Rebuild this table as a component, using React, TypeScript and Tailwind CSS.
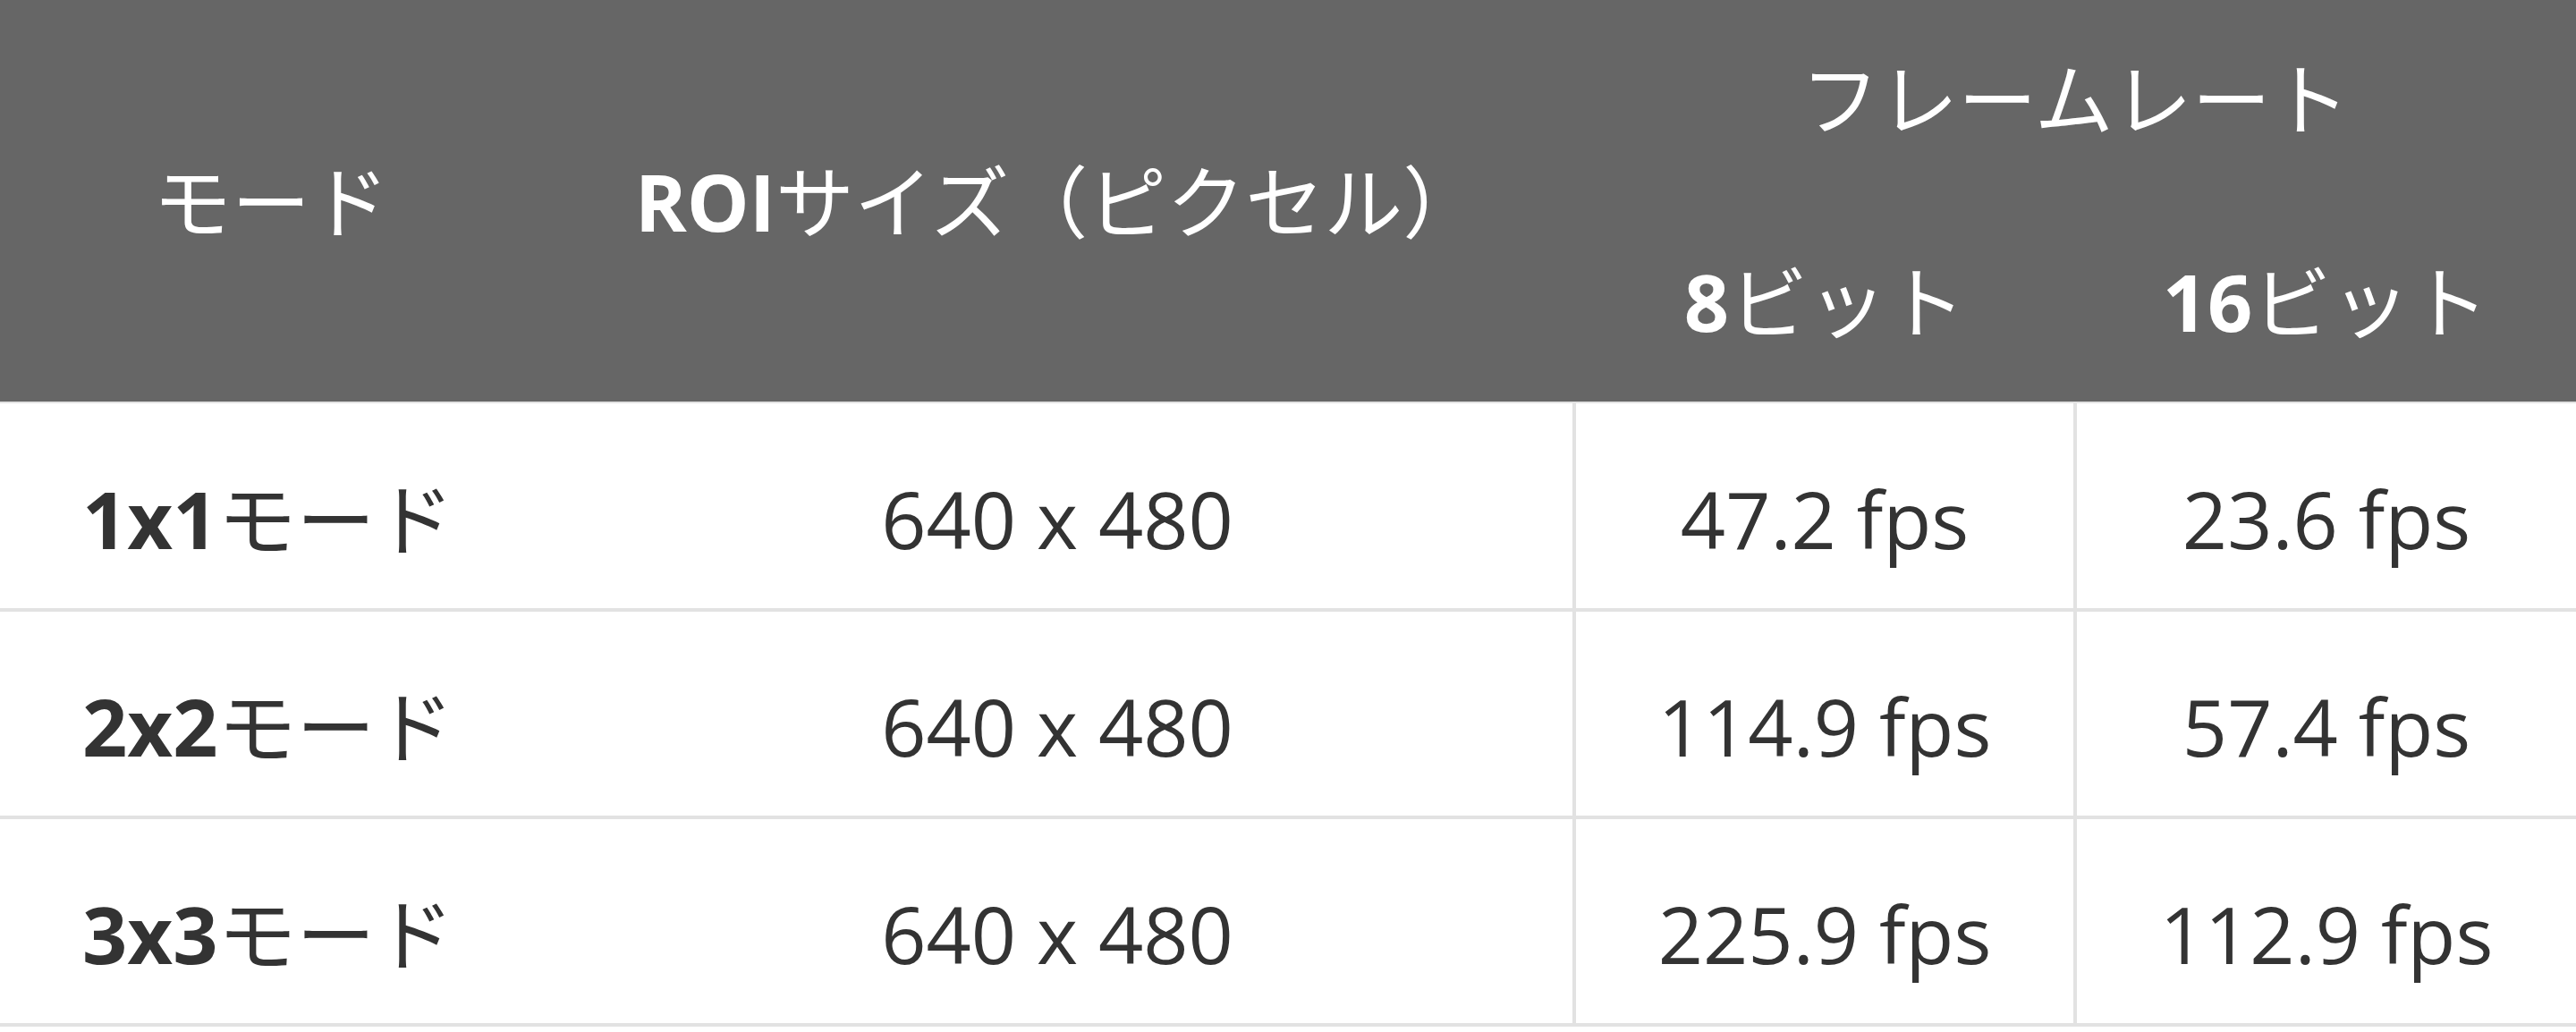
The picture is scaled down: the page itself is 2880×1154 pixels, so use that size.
const rows = [
  { mode: "1x1", size: "640 x 480", fps8: "47.2 fps", fps16: "23.6 fps" },
  { mode: "2x2", size: "640 x 480", fps8: "114.9 fps", fps16: "57.4 fps" },
  { mode: "3x3", size: "640 x 480", fps8: "225.9 fps", fps16: "112.9 fps" },
];

const jp = "font-normal";

export default function App() {
  return (
    <div className="min-h-screen bg-white font-['Open_Sans','Noto_Sans_CJK_JP',sans-serif] text-[88px] leading-none">
      <table className="w-[2880px] table-fixed border-collapse">
        <colgroup>
          <col className="w-[606px]" />
          <col className="w-[1154px]" />
          <col className="w-[560px]" />
          <col className="w-[560px]" />
        </colgroup>
        <thead className="bg-[#666666] text-white">
          <tr className="h-[225px]">
            <th rowSpan={2} className={`text-center align-middle ${jp}`}>
              モード
            </th>
            <th rowSpan={2} className="text-center align-middle">
              <span className="font-bold">ROI</span>
              <span className={jp}>サイズ（ピクセル）</span>
            </th>
            <th colSpan={2} className={`pb-[6px] text-center align-middle ${jp}`}>
              フレームレート
            </th>
          </tr>
          <tr className="h-[225px]">
            <th className="text-center align-middle">
              <span className="font-bold">8</span>
              <span className={jp}>ビット</span>
            </th>
            <th className="text-center align-middle">
              <span className="font-bold">16</span>
              <span className={jp}>ビット</span>
            </th>
          </tr>
        </thead>
        <tbody className="text-[#333333]">
          {rows.map((r, i) => (
            <tr
              key={r.mode}
              className={`h-[232px] border-b-4 border-[#e2e2e2] ${i === 0 ? "border-t-2" : ""}`}
            >
              <td className="pl-[92px] pt-[28px] text-left align-middle">
                <span className="font-bold">{r.mode}</span>
                <span className={jp}>モード</span>
              </td>
              <td className="pt-[28px] text-center align-middle">{r.size}</td>
              <td className="border-l-4 border-[#e2e2e2] pt-[28px] text-center align-middle">
                {r.fps8}
              </td>
              <td className="border-l-4 border-[#e2e2e2] pt-[28px] text-center align-middle">
                {r.fps16}
              </td>
            </tr>
          ))}
        </tbody>
      </table>
    </div>
  );
}
